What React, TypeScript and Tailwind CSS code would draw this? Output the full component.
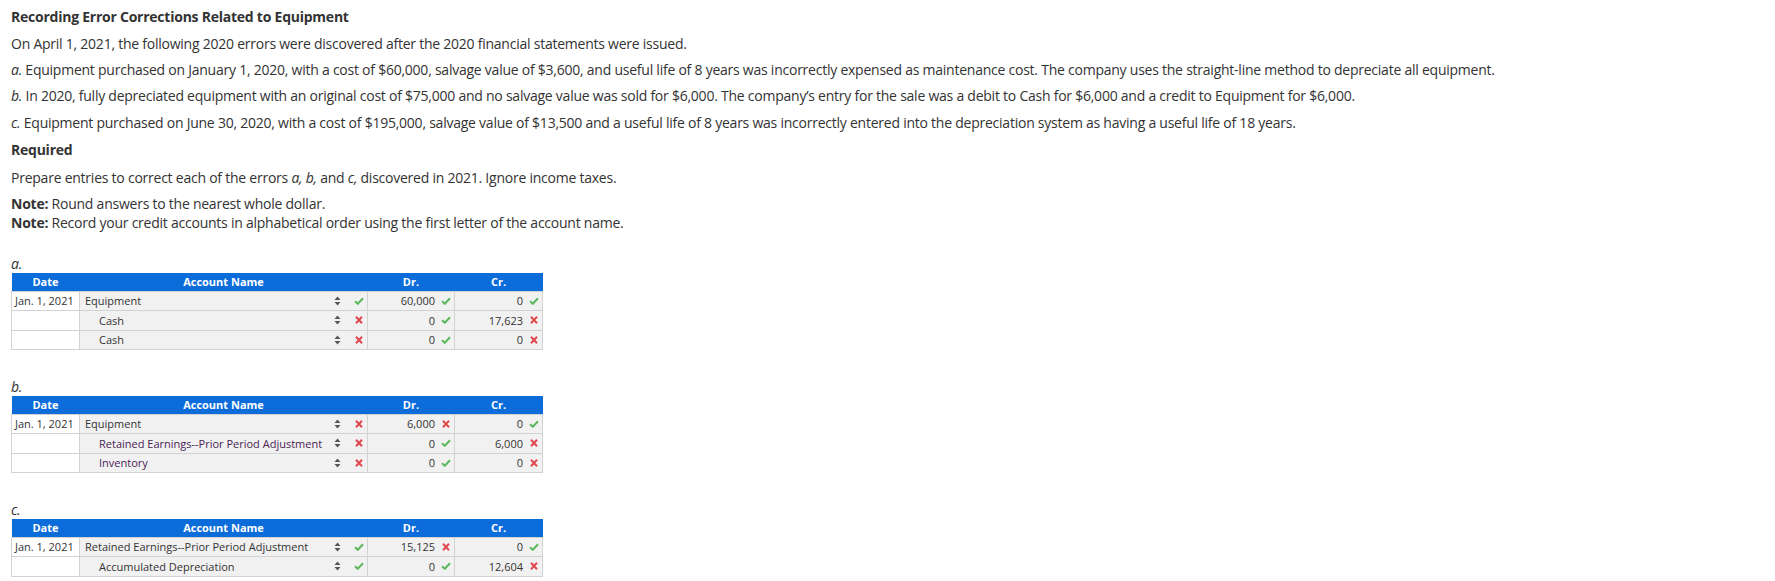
import * as React from 'react';

type Mark = 'ok' | 'bad';

type Row = {
  date?: string;
  account: string;
  indent?: boolean;
  purple?: boolean;
  accMark: Mark;
  dr: string;
  drMark: Mark;
  cr: string;
  crMark: Mark;
};

const Check = () => (
  <svg width="10" height="8" viewBox="0 0 10 8" className="shrink-0">
    <path d="M1 4.2 L3.8 6.8 L9 1.2" fill="none" stroke="#5cb85c" strokeWidth="2" />
  </svg>
);

const Cross = () => (
  <svg width="10" height="8" viewBox="0 0 10 8" className="shrink-0">
    <path d="M2 0.8 L8 7.2 M8 0.8 L2 7.2" fill="none" stroke="#e0484f" strokeWidth="2" />
  </svg>
);

const MarkIcon = ({ mark }: { mark: Mark }) => (mark === 'ok' ? <Check /> : <Cross />);

const SortArrows = () => (
  <svg width="7" height="10" viewBox="0 0 7 10" className="shrink-0">
    <path d="M3.5 0.5 L6.5 4 L0.5 4 Z M0.5 6 L6.5 6 L3.5 9.5 Z" fill="#555" />
  </svg>
);

const JournalTable = ({ rows }: { rows: Row[] }) => (
  <table className="w-[531px] table-fixed border-collapse text-[11px] tracking-normal text-[#333]">
    <colgroup>
      <col className="w-[68px]" />
      <col className="w-[288px]" />
      <col className="w-[87px]" />
      <col className="w-[88px]" />
    </colgroup>
    <thead>
      <tr className="h-[18px] bg-[#0c6cda] font-bold text-white">
        <th className="p-0 leading-none">Date</th>
        <th className="p-0 leading-none">Account Name</th>
        <th className="p-0 leading-none">Dr.</th>
        <th className="p-0 leading-none">Cr.</th>
      </tr>
    </thead>
    <tbody>
      {rows.map((r, i) => (
        <tr key={i} className="h-[19.5px]">
          <td className="border border-[#d2d2d2] bg-white p-0 pl-[3px] leading-none whitespace-nowrap">{r.date ?? ''}</td>
          <td className="border border-[#d2d2d2] bg-[#f1f1f1] p-0">
            <div className="flex items-center pr-[3px]">
              <span className={`flex-1 leading-none whitespace-nowrap ${r.indent ? 'pl-[19px]' : 'pl-[5px]'} ${r.purple ? 'text-[#4a2352]' : ''}`}>{r.account}</span>
              <SortArrows />
              <span className="ml-[13px]"><MarkIcon mark={r.accMark} /></span>
            </div>
          </td>
          <td className="border border-[#d2d2d2] bg-[#f1f1f1] p-0">
            <div className="flex items-center justify-end gap-[6px] pr-[3px] leading-none">
              <span>{r.dr}</span>
              <MarkIcon mark={r.drMark} />
            </div>
          </td>
          <td className="border border-[#d2d2d2] bg-[#f1f1f1] p-0">
            <div className="flex items-center justify-end gap-[6px] pr-[3px] leading-none">
              <span>{r.cr}</span>
              <MarkIcon mark={r.crMark} />
            </div>
          </td>
        </tr>
      ))}
    </tbody>
  </table>
);

const tableA: Row[] = [
  { date: 'Jan. 1, 2021', account: 'Equipment', accMark: 'ok', dr: '60,000', drMark: 'ok', cr: '0', crMark: 'ok' },
  { account: 'Cash', indent: true, accMark: 'bad', dr: '0', drMark: 'ok', cr: '17,623', crMark: 'bad' },
  { account: 'Cash', indent: true, accMark: 'bad', dr: '0', drMark: 'ok', cr: '0', crMark: 'bad' },
];

const tableB: Row[] = [
  { date: 'Jan. 1, 2021', account: 'Equipment', accMark: 'bad', dr: '6,000', drMark: 'bad', cr: '0', crMark: 'ok' },
  { account: 'Retained Earnings--Prior Period Adjustment', indent: true, purple: true, accMark: 'bad', dr: '0', drMark: 'ok', cr: '6,000', crMark: 'bad' },
  { account: 'Inventory', indent: true, purple: true, accMark: 'bad', dr: '0', drMark: 'ok', cr: '0', crMark: 'bad' },
];

const tableC: Row[] = [
  { date: 'Jan. 1, 2021', account: 'Retained Earnings--Prior Period Adjustment', accMark: 'ok', dr: '15,125', drMark: 'bad', cr: '0', crMark: 'ok' },
  { account: 'Accumulated Depreciation', indent: true, accMark: 'ok', dr: '0', drMark: 'ok', cr: '12,604', crMark: 'bad' },
];

export default function App() {
  return (
    <div className="min-h-screen bg-white px-[11px] pt-[7px] font-['Open_Sans',sans-serif] text-[14px] tracking-[-0.24px] text-[#333]">
      <h1 className="text-[14px] leading-[20px] font-bold">Recording Error Corrections Related to Equipment</h1>
      <p className="mt-[7px] leading-[20px]">On April 1, 2021, the following 2020 errors were discovered after the 2020 financial statements were issued.</p>
      <p className="mt-[6px] leading-[20px]">
        <i>a.</i> Equipment purchased on January 1, 2020, with a cost of $60,000, salvage value of $3,600, and useful life of 8 years was incorrectly expensed as maintenance cost. The company uses the straight-line method to depreciate all equipment.
      </p>
      <p className="mt-[6px] leading-[20px]">
        <i>b.</i> In 2020, fully depreciated equipment with an original cost of $75,000 and no salvage value was sold for $6,000. The company’s entry for the sale was a debit to Cash for $6,000 and a credit to Equipment for $6,000.
      </p>
      <p className="mt-[7px] leading-[20px]">
        <i>c.</i> Equipment purchased on June 30, 2020, with a cost of $195,000, salvage value of $13,500 and a useful life of 8 years was incorrectly entered into the depreciation system as having a useful life of 18 years.
      </p>
      <p className="mt-[7px] leading-[20px] font-bold">Required</p>
      <p className="mt-[8px] leading-[20px]">
        Prepare entries to correct each of the errors <i>a, b,</i> and <i>c,</i> discovered in 2021. Ignore income taxes.
      </p>
      <p className="mt-[6px] leading-[19px]">
        <b>Note:</b> Round answers to the nearest whole dollar.
        <br />
        <b>Note:</b> Record your credit accounts in alphabetical order using the first letter of the account name.
      </p>

      <div className="mt-[23px] leading-[18px] italic">a.</div>
      <JournalTable rows={tableA} />

      <div className="mt-[28px] leading-[18px] italic">b.</div>
      <JournalTable rows={tableB} />

      <div className="mt-[28px] leading-[18px] italic">c.</div>
      <JournalTable rows={tableC} />
    </div>
  );
}
